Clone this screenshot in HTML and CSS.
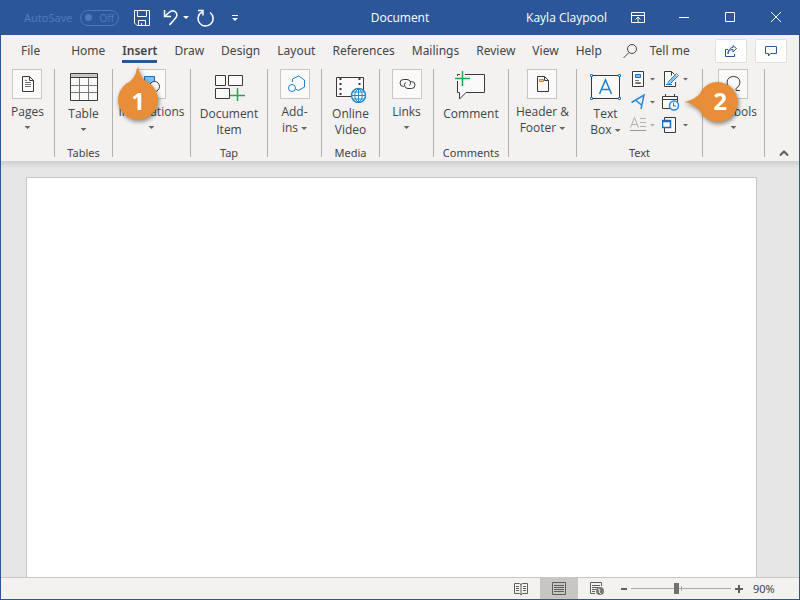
FILE: index.html
```html
<!DOCTYPE html>
<html lang="en">
<head>
  <meta charset="UTF-8">
  <meta name="viewport" content="width=device-width, initial-scale=1.0">
  <title>Document - Word</title>
  <link rel="stylesheet" href="styles.css">
</head>
<body>
  <div class="app">
    <header class="titlebar">
      <div class="quick">
        <label class="autosave">AutoSave
          <input type="checkbox" disabled>
          <span class="toggle"><span class="knob"></span>Off</span>
        </label>
        <button class="save" aria-label="Save">
          <svg width="16" height="16" viewBox="0 0 16 16"><path d="M.5.5h15v15H3L.5 13zM3.5.5v6h9v-6M4.5 15.5v-5h7v5M7.5 15v-2"/></svg>
        </button>
        <button class="undo" aria-label="Undo">
          <svg width="26" height="18" viewBox="0 0 26 18"><path d="M1.500 1v6.500h6.500M1.500 7.500L6 3.500C10-.5 15 3 13.500 7.500C13 9 11 11 6.500 16"/><path class="fill" d="M20 7h6l-3 3z"/></svg>
        </button>
        <button class="redo" aria-label="Repeat">
          <svg width="18" height="18" viewBox="0 0 18 18"><path d="M13 3.500a7.500 7.500 0 1 1-8-.5M1 1.500h5v5"/></svg>
        </button>
        <button class="more" aria-label="Customize toolbar">
          <svg width="6" height="8" viewBox="0 0 6 8"><path d="M0 1.500h6"/><path class="fill" d="M0 4h6L3 7z"/></svg>
        </button>
      </div>
      <h1 class="doc-title">Document</h1>
      <div class="window-side">
        <span class="user">Kayla Claypool</span>
        <button class="win" aria-label="Ribbon display options"><svg width="14" height="12" viewBox="0 0 14 12"><path d="M.5 .5h13v10H.5zM.5 3.500h13M7 10V5M4.500 7.500L7 5l2.500 2.500"/></svg></button>
        <button class="win" aria-label="Minimize"><svg width="12" height="12" viewBox="0 0 12 12"><path d="M1 5.500h10"/></svg></button>
        <button class="win" aria-label="Maximize"><svg width="12" height="12" viewBox="0 0 12 12"><path d="M1.500 .5h9v9h-9z"/></svg></button>
        <button class="win" aria-label="Close"><svg width="12" height="12" viewBox="0 0 12 12"><path d="M1 0l10 10M11 0L1 10"/></svg></button>
      </div>
    </header>

    <nav class="tabs">
      <button class="tab file">File</button>
      <button class="tab">Home</button>
      <button class="tab active">Insert</button>
      <button class="tab">Draw</button>
      <button class="tab">Design</button>
      <button class="tab">Layout</button>
      <button class="tab">References</button>
      <button class="tab">Mailings</button>
      <button class="tab">Review</button>
      <button class="tab">View</button>
      <button class="tab">Help</button>
      <button class="tab tell">
        <svg width="16" height="16" viewBox="0 0 16 16"><circle cx="9" cy="6" r="4.500"/><path d="M6 9.500L.5 15"/></svg>
        Tell me
      </button>
      <div class="tab-actions">
        <button class="chip" aria-label="Share"><svg width="12" height="12" viewBox="0 0 12 12"><path d="M3 4.500H.5v7h9V9M3 9c0-3 2-4.500 5-4.500V7l3.500-3.500L8 .5v2C5 2.500 3 5 3 9z"/></svg></button>
        <button class="chip" aria-label="Comments"><svg width="12" height="12" viewBox="0 0 12 12"><path d="M.5 1.500h11v7H5.500L3.500 11V8.500h-3z"/></svg></button>
      </div>
    </nav>

    <main class="ribbon">
      <section class="group w-small">
        <button class="cmd">
          <span class="boxed"><svg width="28" height="28" viewBox="0 0 28 28"><path class="page" d="M9.500 6.500h7l4 4v11h-11z"/><path class="ink" d="M16.500 6.500v4h4"/><path class="ink thin" d="M12 10.500h2M12 12.500h6M12 14.500h6M12 16.500h6"/></svg></span>
          Pages<i class="caret"></i>
        </button>
      </section>
      <section class="group w-medium">
        <button class="cmd">
          <span class="large"><svg width="32" height="32" viewBox="0 0 32 32"><path class="page" d="M2.500 4.500h27v27h-27z"/><path class="gray-fill" d="M3 5h26v3H3z"/><path class="ink thin" d="M11.500 8v23M20.500 8v23M3 16.500h26M3 23.500h26"/><path class="ink" d="M2.500 8.500h27"/></svg></span>
          Table<i class="caret"></i>
        </button>
        <h2>Tables</h2>
      </section>
      <section class="group w-illustrations">
        <button class="cmd">
          <span class="boxed"><svg width="28" height="28" viewBox="0 0 28 28"><path class="sky" d="M7.500 6.500h10v10h-10z"/><circle class="page" cx="17.500" cy="16.500" r="5"/></svg></span>
          Illustrations<i class="caret"></i>
        </button>
      </section>
      <section class="group w-wide">
        <button class="cmd">
          <span class="large"><svg width="32" height="32" viewBox="0 0 32 32"><path class="page" d="M2.500 6.500h10v10h-10zM15.500 6.500h14v10h-14zM2.500 19.500h14v10h-14z"/><path class="halo" d="M24.500 18v15M17 26.500h15"/><path class="green" d="M24.500 19v13M17 26.500h15"/></svg></span>
          Document<br>Item
        </button>
        <h2>Tap</h2>
      </section>
      <section class="group w-small">
        <button class="cmd">
          <span class="boxed"><svg width="28" height="28" viewBox="0 0 28 28"><path class="blue" d="M11.500 12V9l6-3 6 4v7l-6 3.500-3-1.500"/><circle class="blue" cx="11" cy="18" r="3.500"/></svg></span>
          Add-<span>ins <i class="caret"></i></span>
        </button>
      </section>
      <section class="group w-medium">
        <button class="cmd">
          <span class="large"><svg width="32" height="34" viewBox="0 0 32 34"><path class="page" d="M2.500 8.500h27v19h-27z"/><path class="film" d="M6.500 9v18M25.500 9v18"/><circle class="globe" cx="24.500" cy="26.500" r="7"/><path class="globe-line" d="M24.500 19.500v14M17.500 26.500h14M18.500 23h12M18.500 30h12M24.500 19.500c-5 4-5 10 0 14M24.500 19.500c5 4 5 10 0 14"/></svg></span>
          Online<br>Video
        </button>
        <h2>Media</h2>
      </section>
      <section class="group w-small">
        <button class="cmd">
          <span class="boxed"><svg width="28" height="28" viewBox="0 0 28 28"><path class="ink" d="M11 16.500h-.5a3.500 3.500 0 0 1 0-7h3.500a3.500 3.500 0 0 1 2.500 6M17 11.500h1.500a3.500 3.500 0 0 1 0 7h-3.500a3.500 3.500 0 0 1-2.500-6"/></svg></span>
          Links<i class="caret"></i>
        </button>
      </section>
      <section class="group w-comments">
        <button class="cmd">
          <span class="large"><svg width="32" height="32" viewBox="0 0 32 32"><path class="page" d="M2.500 5.500h27v18H11l-6.500 6.500v-6.500h-2z"/><path class="halo" d="M7.500 2v15M0 9.500h15"/><path class="green" d="M7.500 2v15M0 9.500h15"/></svg></span>
          Comment
        </button>
        <h2>Comments</h2>
      </section>
      <section class="group w-header">
        <button class="cmd">
          <span class="boxed"><svg width="28" height="28" viewBox="0 0 28 28"><path class="page" d="M9.500 6.500h7l4 4v11h-11z"/><path class="orange" d="M11.500 9.500h4v2h-4z"/><path class="ink" d="M16.500 6.500v4h4"/></svg></span>
          Header &amp;<span>Footer <i class="caret"></i></span>
        </button>
      </section>
      <section class="group w-text">
        <div class="text-tools">
          <button class="cmd">
            <span class="large"><svg width="32" height="32" viewBox="0 0 32 32"><path class="page" d="M1.500 6.500h28v23h-28z"/><path class="blue bold" d="M9.500 25L15.500 11l6 14M11.500 20.500h8"/><path class="handle" d="M.5 5.500h2v2h-2zM28.500 5.500h2v2h-2zM.5 28.500h2v2h-2zM28.500 28.500h2v2h-2z"/></svg></span>
            Text<span>Box <i class="caret"></i></span>
          </button>
          <div class="small-tools">
            <button class="mini" aria-label="Quick parts"><svg width="18" height="20" viewBox="0 0 18 20"><path class="page" d="M3.500 2.500h11v15h-11z"/><path class="sky" d="M6.500 5.500h5v3h-5z"/><path class="ink thin" d="M6 11.500h4M6.500 13.500h5v1h-5z"/></svg><i class="caret"></i></button>
            <button class="mini" aria-label="Signature line"><svg width="18" height="20" viewBox="0 0 18 20"><path class="page" d="M13.500 13v4.500h-11v-15h7l3 3"/><path class="ink" d="M9.500 2.500v4"/><path class="blue" d="M4 15.500h6"/><path class="pen" d="M14.500 6.500l-7 7"/><path class="blue" d="M14.500 4.500l2 2-8 8-3 1 1-3z"/></svg><i class="caret"></i></button>
            <button class="mini" aria-label="WordArt"><svg width="18" height="20" viewBox="0 0 18 20"><path class="art" d="M2.500 10.500L15 3 12 17M7 8.500l6 5"/></svg><i class="caret"></i></button>
            <button class="mini" aria-label="Date and time"><svg width="18" height="20" viewBox="0 0 18 20"><path class="page" d="M.5 4.500h15v12H.5z"/><path class="ink" d="M.5 7.500h15M3.500 2v3M12.500 2v3"/><circle class="clock" cx="12" cy="13.500" r="4.500"/><path class="blue" d="M11.500 10.500v3.500h2.500"/></svg></button>
            <button class="mini off" aria-label="Drop cap" disabled><svg width="18" height="20" viewBox="0 0 18 20"><path class="muted" d="M1.500 12.500l4-10 4 10M3 9.500h5M11 3.500h6M11 7.500h6M11 11.500h6"/><path class="muted dark" d="M1 15.500h16"/></svg><i class="caret"></i></button>
            <button class="mini" aria-label="Object"><svg width="18" height="20" viewBox="0 0 18 20"><path class="page" d="M2.500 2.500h11v15h-11z"/><path class="window" d="M.5 5.500h8v7h-8z"/><path class="window" d="M.5 6.500h8"/></svg><i class="caret"></i></button>
          </div>
        </div>
        <h2>Text</h2>
      </section>
      <section class="group w-symbols">
        <button class="cmd">
          <span class="boxed"><svg width="28" height="28" viewBox="0 0 28 28"><path class="ink" d="M8 20.500h4v-2C6 15 7 6.500 14.500 6.500S23 15 17 18.500v2h4"/></svg></span>
          Symbols<i class="caret"></i>
        </button>
      </section>
      <button class="collapse" aria-label="Collapse the ribbon"><svg width="10" height="7" viewBox="0 0 10 7"><path d="M1 5.500l4-4 4 4"/></svg></button>

      <div class="callout first">
        <svg width="40" height="56" viewBox="0 0 40 56"><path d="M20 0c1 6 4 12 8 15.500a20 20 0 1 1-16 0C16 12 19 6 20 0z"/></svg>
        <b>1</b>
      </div>
      <div class="callout second">
        <svg width="56" height="40" viewBox="0 0 56 40"><path d="M0 20c6-1 12-4 15.500-8a20 20 0 1 1 0 16C12 24 6 21 0 20z"/></svg>
        <b>2</b>
      </div>
    </main>

    <div class="workspace">
      <article class="paper"></article>
    </div>

    <footer class="status">
      <button class="view" aria-label="Read mode"><svg width="14" height="14" viewBox="0 0 14 14"><path d="M.5 1.500h5l1.500 1 1.500-1h5v10h-5l-1.500 1.500-1.500-1.500h-5zM7 2v11M2 4.500h3M2 6.500h3M2 8.500h3M9 4.500h3M9 6.500h3M9 8.500h3"/></svg></button>
      <button class="view on" aria-label="Print layout"><svg width="14" height="14" viewBox="0 0 14 14"><path d="M.5.500h13v12H.500zM2 3.500h10M2 5.500h10M2 7.500h10M2 9.500h10"/></svg></button>
      <button class="view" aria-label="Web layout"><svg width="16" height="14" viewBox="0 0 16 14"><path d="M6 11.500H1.500v-11h11V4M3 3.500h8M3 5.500h6M3 7.500h4M3 9.500h3"/><circle class="world" cx="11" cy="9" r="4"/><path class="land" d="M9 7l2 1-1 2 2 2"/></svg></button>
      <button class="step" aria-label="Zoom out"><svg width="8" height="8" viewBox="0 0 8 8"><path d="M1 4h6"/></svg></button>
      <input class="zoom" type="range" min="10" max="200" value="95" aria-label="Zoom">
      <button class="step" aria-label="Zoom in"><svg width="8" height="8" viewBox="0 0 8 8"><path d="M0 4h8M4 0v8"/></svg></button>
      <span class="percent">90%</span>
    </footer>
  </div>
</body>
</html>
```
FILE: styles.css
```css
* {
  box-sizing: border-box;
}
body {
  margin: 0;
  font-family: "Noto Sans", "Open Sans", sans-serif;
  font-size: 12px;
  line-height: 16px;
  color: #444;
}
button {
  font: inherit;
  color: inherit;
  background: none;
  border: none;
  padding: 0;
}
svg {
  display: block;
  fill: none;
  stroke: currentColor;
}
h1, h2 {
  margin: 0;
  font-weight: normal;
}
.app {
  display: flex;
  flex-direction: column;
  height: 100vh;
  border: 1px solid #2b579a;
  border-top: none;
  background: #f3f2f1;
}

/* title bar */
.titlebar {
  display: grid;
  grid-template-columns: 1fr auto 1fr;
  align-items: center;
  height: 35px;
  background: #2b579a;
  color: white;
}
.fill {
  fill: currentColor;
  stroke: none;
}
.quick {
  display: flex;
  align-items: center;
  padding-left: 23px;
}
.autosave {
  display: flex;
  align-items: center;
  gap: 8px;
  width: 110px;
  color: #4d7ab8;
  font-size: 11px;
  white-space: nowrap;
}
.autosave input {
  display: none;
}
.toggle {
  display: flex;
  align-items: center;
  gap: 7px;
  height: 16px;
  padding: 0 4px;
  border: 1px solid #4d7ab8;
  border-radius: 8px;
  font-size: 10px;
}
.knob {
  width: 7px;
  height: 7px;
  border-radius: 50%;
  background: #4d7ab8;
}
.undo {
  margin-left: 13px;
}
.undo svg, .redo svg {
  stroke-width: 1.5;
}
.redo {
  margin-left: 8px;
}
.more {
  margin-left: 17px;
}
.doc-title {
  font-family: "Open Sans", sans-serif;
  font-size: 12px;
}
.window-side {
  display: flex;
  align-items: center;
  justify-content: flex-end;
}
.user {
  font-family: "Open Sans", sans-serif;
  margin-right: 8px;
}
.win {
  display: flex;
  justify-content: center;
  width: 46px;
}

/* tabs */
.tabs {
  display: flex;
  align-items: center;
  gap: 17px;
  height: 31px;
  padding: 0 12px 0 20px;
}
.tab {
  height: 25px;
  padding-top: 4px;
  border-bottom: 3px solid transparent;
  white-space: nowrap;
}
.file {
  margin-right: 14px;
}
.active {
  font-weight: 600;
  border-color: #2b579a;
}
.tell {
  display: flex;
  align-items: center;
  gap: 11px;
  margin-left: 4px;
}
.tab-actions {
  display: flex;
  gap: 8px;
  margin-left: auto;
}
.chip {
  display: flex;
  align-items: center;
  justify-content: center;
  width: 32px;
  height: 24px;
  background: white;
  border: 1px solid #e1dfdd;
  border-radius: 2px;
  color: #2b579a;
}

/* ribbon */
.ribbon {
  position: relative;
  z-index: 1;
  display: flex;
  padding: 3px 0 4px;
  background: #f3f2f1;
}
.group {
  display: flex;
  flex-direction: column;
  justify-content: space-between;
  align-items: center;
  height: 88px;
  border-right: 1px solid #b3b0ad;
}
.group h2 {
  font-size: 11px;
  line-height: 14px;
  margin-bottom: -3px;
}
.w-small { width: 54px; }
.w-medium { width: 58px; }
.w-illustrations { width: 78px; }
.w-wide { width: 77px; }
.w-comments { width: 75px; }
.w-header { width: 68px; }
.w-text { width: 126px; }
.w-symbols { width: 62px; }
.cmd {
  display: flex;
  flex-direction: column;
  align-items: center;
  font-family: "Open Sans", sans-serif;
  white-space: nowrap;
}
.boxed {
  border: 1px solid #c8c6c4;
  background: #fafafa;
  margin-bottom: 5px;
}
.large {
  height: 32px;
  margin-bottom: 5px;
}
.caret {
  display: inline-block;
  width: 6px;
  height: 3px;
  background: #666;
  clip-path: polygon(0 0, 100% 0, 50% 100%);
  vertical-align: 2px;
}
.cmd > .caret {
  margin: 6px 0;
}
.page { fill: #fafafa; stroke: #3b3a39; }
.ink { stroke: #3b3a39; }
.thin { stroke: #797775; }
.bold { stroke-width: 1.5; }
.gray-fill { fill: #c8c6c4; stroke: none; }
.sky { fill: #83beec; stroke: #1e6fbe; }
.blue { stroke: #1e7fcb; }
.green { stroke: #18ab50; stroke-width: 1.5; }
.halo { stroke: #f3f2f1; stroke-width: 5; }
.film { stroke: #3b3a39; stroke-width: 2; stroke-dasharray: 2 3; }
.globe { fill: #fafafa; stroke: #1e8bcd; stroke-width: 1.5; }
.globe-line { stroke: #1e8bcd; }
.orange { fill: #f8c99b; stroke: #e07b1c; }
.handle { fill: white; stroke: #1e7fcb; }
.pen { stroke: #83beec; stroke-width: 2; }
.art { stroke: #2b88d8; stroke-width: 1.5; }
.clock { fill: #fafafa; stroke: #2b88d8; stroke-width: 1.5; }
.muted { stroke: #b1afad; }
.dark { stroke: #979593; }
.window { fill: #fafafa; stroke: #1e6fbe; stroke-width: 1.5; }
.text-tools {
  display: flex;
  gap: 7px;
}
.small-tools {
  display: grid;
  grid-template-columns: 33px 28px;
  grid-auto-rows: 20px;
  row-gap: 3px;
}
.mini {
  display: flex;
  align-items: center;
  gap: 3px;
}
.off .caret {
  background: #b1afad;
}
.collapse {
  align-self: flex-end;
  margin: 0 10px 0 auto;
}
.collapse svg {
  stroke: #605e5c;
  stroke-width: 2;
}

/* numbered steps over the ribbon */
.callout {
  position: absolute;
  color: white;
  filter: drop-shadow(1px 2px 2px rgba(0, 0, 0, 0.45));
}
.callout svg {
  fill: #e98e38;
  stroke: none;
}
.callout b {
  position: absolute;
  right: 0;
  bottom: 0;
  width: 40px;
  font-family: "Open Sans", sans-serif;
  font-size: 24px;
  line-height: 38px;
  height: 40px;
  text-align: center;
}
.first {
  left: 117px;
  top: 0;
}
.second {
  left: 683px;
  top: 16px;
}

/* document */
.workspace {
  display: flex;
  flex: 1;
  min-height: 0;
  padding: 16px 42px 0 25px;
  background: linear-gradient(#cfcfcf, #e6e6e6 7px);
}
.paper {
  flex: 1;
  background: white;
  border: 1px solid #c6c6c6;
  border-bottom: none;
}

/* status bar */
.status {
  display: flex;
  align-items: center;
  justify-content: flex-end;
  height: 22px;
  padding-right: 25px;
  border-top: 1px solid #c6c6c6;
}
.view {
  display: flex;
  align-items: center;
  justify-content: center;
  width: 38px;
  height: 21px;
  color: #605e5c;
}
.on {
  background: #c8c6c4;
}
.world {
  fill: #797775;
  stroke: none;
}
.land {
  stroke: #f3f2f1;
}
.step {
  display: flex;
  justify-content: center;
  width: 15px;
}
.step svg {
  stroke: #605e5c;
  stroke-width: 2;
}
.zoom {
  appearance: none;
  width: 100px;
  height: 12px;
  margin: 0;
  background: linear-gradient(#aaa, #aaa) center / 100% 1px no-repeat, linear-gradient(#aaa, #aaa) 50px center / 1px 5px no-repeat;
}
.zoom::-webkit-slider-thumb {
  appearance: none;
  width: 5px;
  height: 11px;
  background: #737170;
}
.percent {
  width: 21px;
  margin-left: 7px;
  font-size: 11px;
}
```
